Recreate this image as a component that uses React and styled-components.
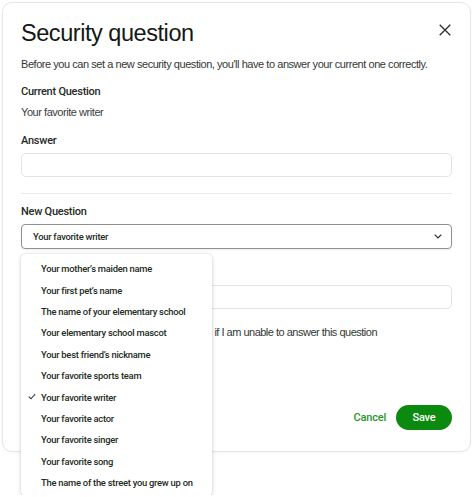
import React from "react";
import styled, { createGlobalStyle } from "styled-components";

const GlobalStyle = createGlobalStyle`
  body {
    margin: 0;
    background: #fff;
    font-family: "Liberation Sans", Arial, sans-serif;
    color: #1f231f;
  }
`;

const Page = styled.div`
  padding: 2px 3px 0 2px;
  height: 495px;
  box-sizing: border-box;
`;

const Card = styled.div`
  position: relative;
  border: 1px solid #e4e7e4;
  border-radius: 10px;
  background: #fff;
  padding: 16px 18px 21px 18px;
  box-shadow: 0 1px 3px rgba(0, 0, 0, 0.04);
`;

const Header = styled.div`
  display: flex;
  justify-content: space-between;
  align-items: flex-start;
`;

const Title = styled.h1`
  margin: 0;
  font-size: 23.5px;
  line-height: 28px;
  font-weight: 400;
  letter-spacing: -0.45px;
  color: #151815;
`;

const CloseButton = styled.button`
  border: none;
  background: none;
  padding: 0;
  margin: 5px 1px 0 0;
  width: 12px;
  height: 12px;
  display: flex;
`;

const Description = styled.p`
  margin: 10px 0 0;
  font-size: 11px;
  line-height: 14px;
  letter-spacing: -0.45px;
  color: #333833;
`;

const Label = styled.div`
  margin-top: ${(p) => p.top || 15}px;
  font-family: Roboto, "Liberation Sans", sans-serif;
  font-size: 11px;
  line-height: 14px;
  font-weight: 500;
  letter-spacing: -0.25px;
  color: #252a25;
`;

const Value = styled.div`
  margin-top: 6px;
  font-size: 11px;
  line-height: 14px;
  letter-spacing: -0.45px;
  color: #3b403b;
`;

const Field = styled.div`
  box-sizing: border-box;
  margin-top: 5px;
  height: 24px;
  border: 1px solid #e2e5e2;
  border-radius: 5px;
  background: #fff;
`;

const Divider = styled.hr`
  margin: 16px 0 0;
  border: none;
  border-top: 1px solid #e8eae8;
`;

const SelectWrap = styled.div`
  position: relative;
  margin-top: 5px;
`;

const Select = styled.div`
  box-sizing: border-box;
  height: 25px;
  border: 1px solid #8e938e;
  border-radius: 4px;
  display: flex;
  align-items: center;
  justify-content: space-between;
  padding: 0 9px 0 11px;
  font-family: Roboto, "Liberation Sans", sans-serif;
  font-size: 9.4px;
  font-weight: 500;
  letter-spacing: -0.25px;
  color: #262c26;
  box-shadow: 0 1px 2px rgba(0, 0, 0, 0.08);
`;

const Menu = styled.ul`
  position: absolute;
  z-index: 5;
  top: 30px;
  left: 0;
  width: 191px;
  margin: 0;
  padding: 4px 0 3px;
  list-style: none;
  background: #fff;
  border-radius: 5px;
  box-shadow: 0 1px 5px rgba(0, 0, 0, 0.16), 0 0 0 1px rgba(0, 0, 0, 0.03);
`;

const MenuItem = styled.li`
  position: relative;
  height: 21.4px;
  display: flex;
  align-items: center;
  padding-left: 20px;
  font-family: Roboto, "Liberation Sans", sans-serif;
  font-size: 9.4px;
  font-weight: 500;
  letter-spacing: -0.25px;
  color: #242b24;
  white-space: nowrap;
`;

const Check = styled.span`
  position: absolute;
  left: 7px;
  top: 7px;
  display: flex;
`;

const CheckRow = styled.label`
  margin-top: 15px;
  display: flex;
  align-items: center;
  gap: 0;
  font-size: 11px;
  line-height: 14px;
  letter-spacing: -0.5px;
  color: #333833;
`;

const Box = styled.span`
  width: 14px;
  height: 14px;
  border: 1px solid #8e938e;
  border-radius: 3px;
`;

const Footer = styled.div`
  margin-top: 65px;
  display: flex;
  justify-content: flex-end;
  align-items: center;
  gap: 10px;
`;

const TextButton = styled.button`
  border: none;
  background: none;
  padding: 0;
  font-family: Roboto, "Liberation Sans", sans-serif;
  font-size: 11px;
  font-weight: 500;
  letter-spacing: -0.2px;
  color: #2a962a;
`;

const PrimaryButton = styled.button`
  border: none;
  height: 25px;
  width: 56px;
  border-radius: 13px;
  background: #0c8a0f;
  color: #fff;
  font-family: Roboto, "Liberation Sans", sans-serif;
  font-size: 11px;
  font-weight: 500;
  letter-spacing: -0.2px;
`;

const questions = [
  "Your mother\u2019s maiden name",
  "Your first pet\u2019s name",
  "The name of your elementary school",
  "Your elementary school mascot",
  "Your best friend\u2019s nickname",
  "Your favorite sports team",
  "Your favorite writer",
  "Your favorite actor",
  "Your favorite singer",
  "Your favorite song",
  "The name of the street you grew up on",
];

export default function App() {
  const selected = "Your favorite writer";
  return (
    <>
      <GlobalStyle />
      <Page>
        <Card>
          <Header>
            <Title>Security question</Title>
            <CloseButton aria-label="Close">
              <svg width="12" height="12" viewBox="0 0 12 12">
                <path d="M0.7 0.7l10.6 10.6M11.3 0.7L0.7 11.3" stroke="#2a2f2a" strokeWidth="1.3" />
              </svg>
            </CloseButton>
          </Header>
          <Description>
            Before you can set a new security question, you'll have to answer your current one
            correctly.
          </Description>

          <Label top={14}>Current Question</Label>
          <Value>Your favorite writer</Value>

          <Label>Answer</Label>
          <Field />

          <Divider />

          <Label top={11}>New Question</Label>
          <SelectWrap>
            <Select>
              {selected}
              <svg width="8" height="5" viewBox="0 0 8 5">
                <path d="M0.7 0.7l3.3 3.3 3.3-3.3" fill="none" stroke="#2a2f2a" strokeWidth="1.2" />
              </svg>
            </Select>
            <Menu>
              {questions.map((q) => (
                <MenuItem key={q}>
                  {q === selected && (
                    <Check>
                      <svg width="8" height="7" viewBox="0 0 8 7">
                        <path d="M0.8 3.6l2.2 2.2L7.2 1" fill="none" stroke="#283028" strokeWidth="1.1" />
                      </svg>
                    </Check>
                  )}
                  {q}
                </MenuItem>
              ))}
            </Menu>
          </SelectWrap>

          <Label top={17}>Answer</Label>
          <Field />

          <CheckRow>
            <Box />
            &nbsp;Contact me with another backup option if I am unable to answer this question
          </CheckRow>

          <Footer>
            <TextButton>Cancel</TextButton>
            <PrimaryButton>Save</PrimaryButton>
          </Footer>
        </Card>
      </Page>
    </>
  );
}
